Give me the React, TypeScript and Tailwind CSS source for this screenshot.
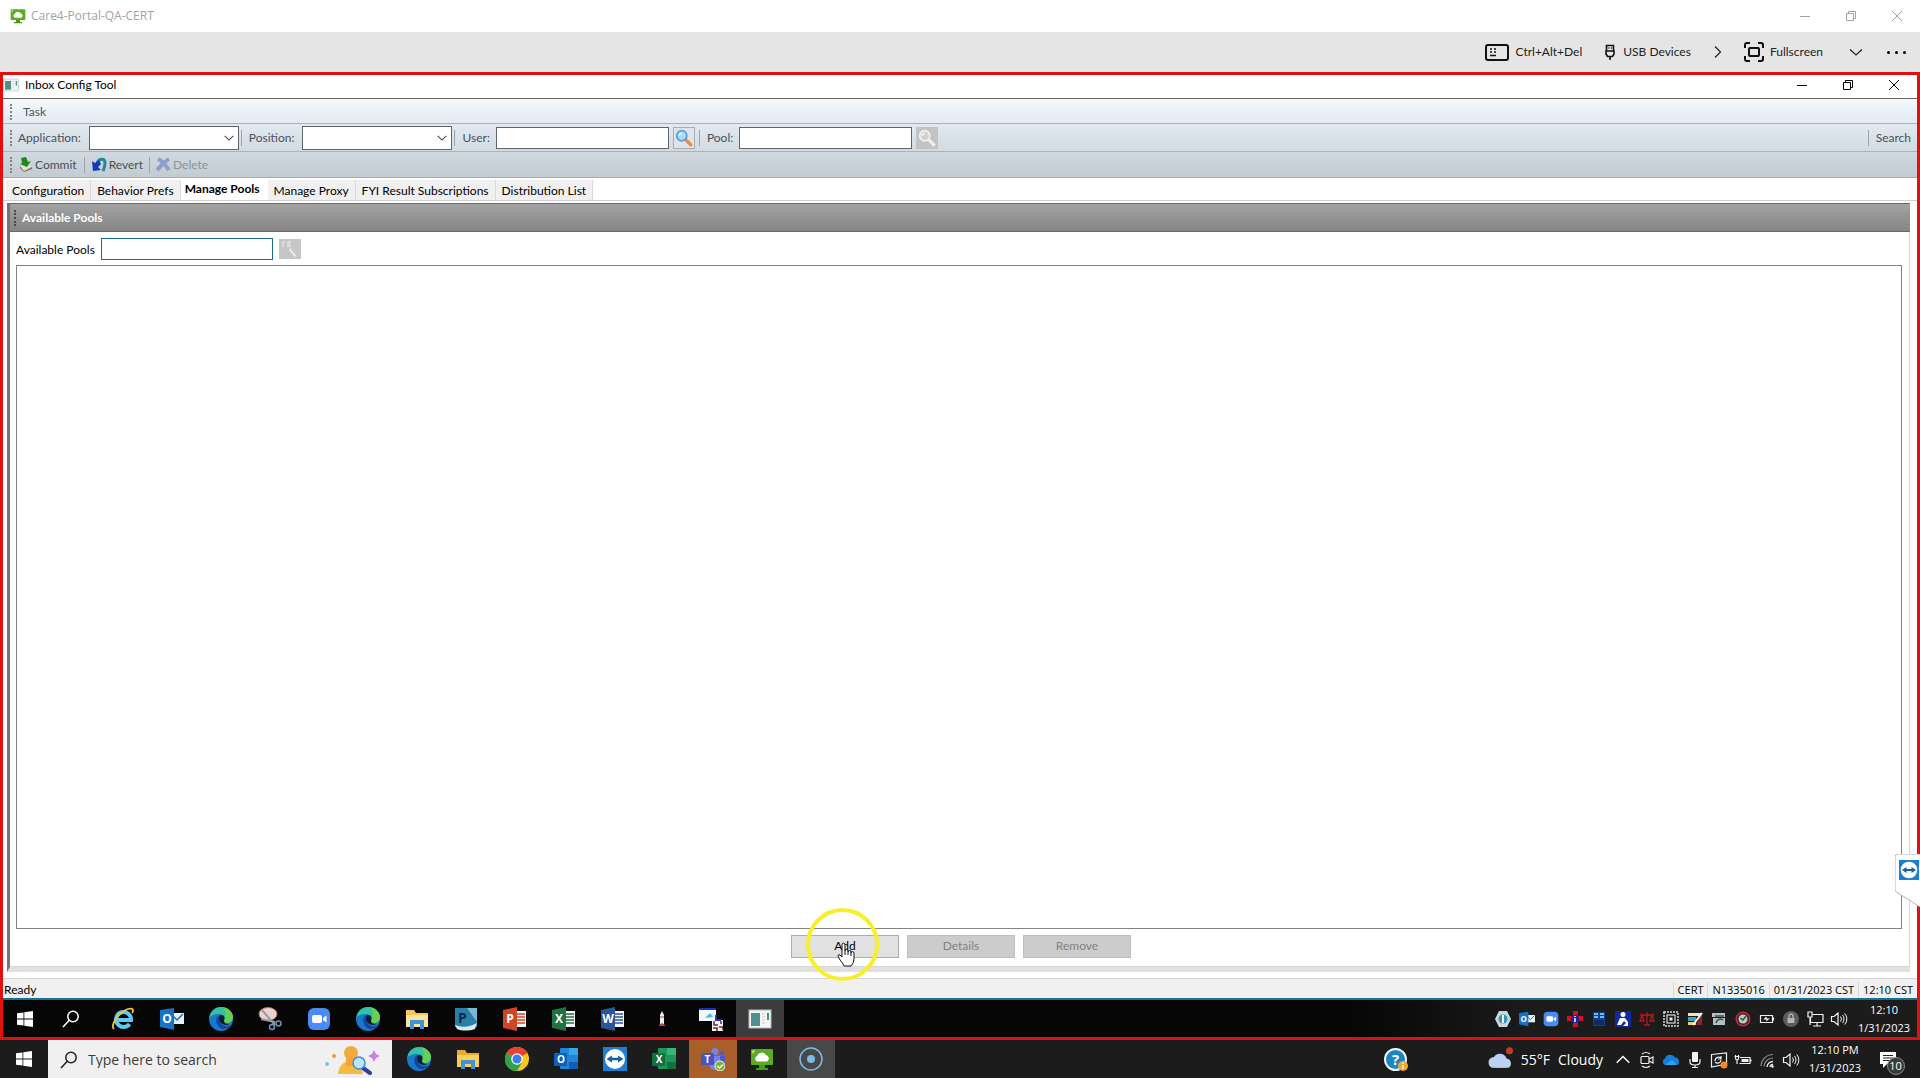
import type { ReactNode } from 'react'

interface IconProps {
  readonly size?: number
}

interface BarItem {
  readonly id: string
  readonly icon: ReactNode
  readonly active?: string
}

function Svg({ size = 24, box = 24, children }: { readonly size?: number; readonly box?: number; readonly children: ReactNode }) {
  return (
    <svg width={size} height={size} viewBox={`0 0 ${box} ${box}`} fill="none" aria-hidden="true" className="block shrink-0">
      {children}
    </svg>
  )
}

/* ---------- window glyphs ---------- */

function MinimizeIcon() {
  return (
    <Svg size={12} box={12}>
      <path d="M1 6.500h10" stroke="currentColor" />
    </Svg>
  )
}

function RestoreIcon() {
  return (
    <Svg size={12} box={12}>
      <path d="M1.500 3.500h7v7h-7zM3.500 3.500v-2h7v7h-2" stroke="currentColor" />
    </Svg>
  )
}

function CloseIcon() {
  return (
    <Svg size={12} box={12}>
      <path d="M1 1l10 10M11 1L1 11" stroke="currentColor" />
    </Svg>
  )
}

function Chevron({ d, size = 14 }: { readonly d: string; readonly size?: number }) {
  return (
    <Svg size={size} box={14}>
      <path d={d} stroke="currentColor" strokeWidth="1.2" />
    </Svg>
  )
}

function PortalIcon({ size = 16 }: IconProps) {
  return (
    <Svg size={size}>
      <rect x="1" y="2" width="22" height="16" rx="1" fill="#5cab22" />
      <path d="M9 18h6v3h3v2H6v-2h3z" fill="#4b9a1b" />
      <path d="M7 14.500a3 3 0 0 1 0-5.500 5 5 0 0 1 9-1 3.500 3.500 0 0 1 1 6.500z" fill="#fff" />
      <path d="M2 4l3-1-2 4z" fill="#d6f0c0" />
    </Svg>
  )
}

function AppWindowIcon({ size = 16 }: IconProps) {
  return (
    <Svg size={size}>
      <rect x="1" y="3" width="22" height="18" fill="#f4f6f6" stroke="#b4bcc0" />
      <rect x="3" y="6" width="9" height="13" fill="#4f8f8c" />
      <path d="M14 7h3M14 10h3M14 13h3M14 16h3" stroke="#d8c4c4" />
      <rect x="19" y="6" width="2" height="7" fill="#3d9a6c" />
    </Svg>
  )
}

/* ---------- toolbar glyphs ---------- */

function CommitIcon() {
  return (
    <Svg size={15} box={15}>
      <path d="M2 9l8-3 4 4-8 4z" fill="#e6e2d0" />
      <path d="M2 9l4 5 8-4v2l-8 3-4-4z" fill="#77776c" />
      <path d="M3 1l5-1 2 5 3-1-4 6-7-3 2-1z" fill="#1d8a1d" />
    </Svg>
  )
}

function RevertIcon() {
  return (
    <Svg size={15} box={15}>
      <path d="M5 6C7 1 13 1 13 6c0 4-1 6-2 8" stroke="#1f8a9c" strokeWidth="3" />
      <path d="M0 4l3 2 4-3 2 4-3 3 3 3-8 1z" fill="#1238c4" />
    </Svg>
  )
}

function DeleteIcon() {
  return (
    <Svg size={15} box={15}>
      <path d="M2 2c5 2 7 6 11 11M13 2C9 4 5 9 1 13" stroke="#8c9fc8" strokeWidth="4" />
    </Svg>
  )
}

function LensIcon({ muted = false }: { readonly muted?: boolean }) {
  return (
    <Svg size={18} box={16}>
      <path d="M9 9l5 5" stroke={muted ? '#ededed' : '#e2953c'} strokeWidth="3" strokeLinecap="round" />
      <circle cx="6" cy="6" r="4.500" fill={muted ? '#d2d2d2' : '#a9dcf8'} stroke={muted ? '#f2f2f2' : '#5a9fd6'} strokeWidth="1.500" />
      <path d="M4 6a2 2 0 0 1 2-2" stroke="#fff" />
    </Svg>
  )
}

function PoolLensIcon() {
  return (
    <Svg size={18} box={18}>
      <path d="M2 7V2h2M6 2h4M6 4h3M6 6h4" stroke="#f4f4f4" />
      <path d="M9 9l6 7" stroke="#efefef" strokeWidth="3" />
      <path d="M10 9l6 7" stroke="#b3b3b3" />
    </Svg>
  )
}

/* ---------- portal bar glyphs ---------- */

function KeyboardIcon() {
  return (
    <Svg size={24}>
      <rect x="1" y="5" width="22" height="15" rx="2" stroke="#111" strokeWidth="2" />
      <path d="M5 9h2M9 9h2M5 12h2M9 12h2M5 15.500h6" stroke="#111" strokeWidth="1.500" />
    </Svg>
  )
}

function UsbIcon() {
  return (
    <Svg size={16} box={16}>
      <path d="M4.500 7V1.500h7V7M4 7h8v3l-1.500 2.500h-5L4 10zM8 12.500V16M6.500 4h1M9 4h1" stroke="#111" strokeWidth="1.600" />
    </Svg>
  )
}

function FullscreenIcon() {
  return (
    <Svg size={22} box={22}>
      <path d="M2 7V4q0-2 2-2h3M15 2h3q2 0 2 2v3M20 15v3q0 2-2 2h-3M7 20H4q-2 0-2-2v-3" stroke="#111" strokeWidth="2" />
      <rect x="6" y="7" width="10" height="8" rx="1" stroke="#111" strokeWidth="2" />
    </Svg>
  )
}

/* ---------- taskbar glyphs ---------- */

function StartIcon() {
  return (
    <Svg size={16} box={16}>
      <path d="M0 2.300l6.500-.9v6.200H0zM7.300 1.300L16 0v7.600H7.300zM0 8.400h6.500v6.200L0 13.700zM7.300 8.400H16V16l-8.700-1.300z" fill="#fff" />
    </Svg>
  )
}

function FindIcon({ color = '#fff' }: { readonly color?: string }) {
  return (
    <Svg size={18} box={18}>
      <circle cx="11" cy="6.500" r="5.200" stroke={color} strokeWidth="1.500" />
      <path d="M7.300 10.300L1 17" stroke={color} strokeWidth="1.600" />
    </Svg>
  )
}

function ExplorerIEIcon() {
  return (
    <Svg>
      <path d="M18.500 17A7.500 7.500 0 1 1 20 13H6" stroke="#5ec9f2" strokeWidth="4" />
      <path d="M3 22C-1 18 8 5 17 2c5-1.500 6 1 4 4" stroke="#f3c53a" strokeWidth="1.800" />
    </Svg>
  )
}

function EdgeIcon() {
  return (
    <Svg>
      <circle cx="12" cy="12" r="12" fill="#1679cc" />
      <path d="M.5 11C1 4 6 0 12 0c7 0 12 5 12 10 0 4-3 6-6 6-3 0-4-1-3-3 1-3-1-6-5-6-4 0-8 1-9.500 4z" fill="#36c2a0" />
      <path d="M14 .2C20 1 24 6 24 10c0 4-3 6-6 6-3 0-4-1-3-3 2-3 3-9-1-12.800z" fill="#66d04f" />
      <path d="M9 9c-4 4-1 12 5 13 3 .5 6-1 8-3.500-5 2-11 0-11-5 0-2 1-3 2-3.500-1-1.500-3-2-4-1z" fill="#12499c" />
      <path d="M15.300 12.500c1-3-1-5-4-4.500 0 0-1.500 2-1 5 1 4 6 6 11 4.500-5 0-7-2.500-6-5z" fill="#0c1c33" />
    </Svg>
  )
}

function SnipIcon() {
  return (
    <Svg>
      <ellipse cx="10" cy="7" rx="9" ry="6.500" fill="#e9d4d2" stroke="#b96a66" />
      <path d="M3 12l14 3M4 3l13 15" stroke="#9a9aa2" strokeWidth="2" />
      <circle cx="14" cy="20" r="2.500" stroke="#6f93b8" strokeWidth="1.500" />
      <circle cx="20.500" cy="16.500" r="2.500" stroke="#6f93b8" strokeWidth="1.500" />
    </Svg>
  )
}

function ZoomIcon({ size = 24 }: IconProps) {
  return (
    <Svg size={size}>
      <rect x="1" y="1" width="22" height="22" rx="6" fill="#4a8cf6" />
      <rect x="5" y="8" width="10" height="8" rx="2" fill="#fff" />
      <path d="M16 11l3.500-2.500v7L16 13z" fill="#fff" />
    </Svg>
  )
}

function FolderIcon({ dark = false }: { readonly dark?: boolean }) {
  return (
    <Svg>
      <path d="M1 3h8l2 3h12v14H1z" fill={dark ? '#e9a92f' : '#f3c55a'} />
      <path d="M1 8h22v12H1z" fill={dark ? '#fbcf55' : '#fde49b'} />
      <path d="M5 13h14v9h-4v-5H9v5H5z" fill="#3f94d8" />
    </Svg>
  )
}

function PortfolioIcon() {
  return (
    <Svg>
      <rect x="1" y="1" width="22" height="19" fill="#2b7fa8" />
      <path d="M13 1h10v14z" fill="#7db8d3" />
      <path d="M1 18c8 3 15 2 22-2l-2 6c-6 2-13 2-18 0z" fill="#dbe9f1" />
      <text x="4" y="16" fontSize="14" fontWeight="700" fontFamily="Open Sans" fill="#0d2c4a">P</text>
    </Svg>
  )
}

function OfficeIcon({ letter, color, size = 24 }: { readonly letter: string; readonly color: string; readonly size?: number }) {
  return (
    <Svg size={size}>
      <rect x="12" y="4" width="11" height="16" fill="#f5f5f5" />
      <path d="M14 7h8M14 10h8M14 13h8M14 16h8" stroke={color} strokeWidth="1.300" />
      <path d="M0 3l14-3v24L0 21z" fill={color} />
      <text x="7" y="16" textAnchor="middle" fontSize="12" fontWeight="700" fontFamily="Open Sans" fill="#fff">{letter}</text>
    </Svg>
  )
}

function OldOutlookIcon({ size = 24 }: IconProps) {
  return (
    <Svg size={size}>
      <rect x="12" y="6" width="12" height="11" fill="#e8f2fb" />
      <path d="M13 9l4 4 6-6" stroke="#1670bd" strokeWidth="1.500" />
      <path d="M0 3l14-2v22L0 20z" fill="#1572c4" />
      <text x="7" y="16" textAnchor="middle" fontSize="12" fontWeight="700" fontFamily="Open Sans" fill="#fff">O</text>
    </Svg>
  )
}

function NewOfficeIcon({ letter, dark, mid, light }: { readonly letter: string; readonly dark: string; readonly mid: string; readonly light: string }) {
  return (
    <Svg>
      <rect x="6" y="1" width="18" height="21" rx="1" fill={mid} />
      <path d="M15 1h9v7h-9z" fill={light} />
      <path d="M15 15h9v7h-9z" fill={dark} />
      <rect x="0" y="6" width="13" height="13" rx="1" fill={dark} />
      <text x="7" y="16" textAnchor="middle" fontSize="10" fontWeight="700" fontFamily="Open Sans" fill="#fff">{letter}</text>
    </Svg>
  )
}

function RocketIcon() {
  return (
    <Svg>
      <path d="M12 4l2 4v9h-4V8z" fill="#eee" />
      <path d="M10 10h4" stroke="#d63a2a" />
      <path d="M9 18l3-2 3 2v1H9z" fill="#c9452f" />
    </Svg>
  )
}

function RemoteIcon() {
  return (
    <Svg>
      <rect x="0" y="1" width="17" height="13" fill="#f4f8ff" />
      <path d="M0 2h17" stroke="#1b2fb8" strokeWidth="2" />
      <path d="M6 11l5-5 3 4z" fill="#3cc0d8" />
      <rect x="13" y="13" width="11" height="11" fill="#f5f5f5" />
      <path d="M15 14v4h4M22 14v3M14 21h4v3M20 20h4v3" stroke="#7d1f3c" strokeWidth="1.500" />
      <path d="M17 8v5h5" stroke="#2235b5" strokeWidth="2" />
    </Svg>
  )
}

function ChromeIcon() {
  return (
    <Svg>
      <circle cx="12" cy="12" r="12" fill="#fbc919" />
      <path d="M12 12L1.600 6A12 12 0 0 1 22.400 6z" fill="#e8412f" />
      <path d="M12 12L1.600 6A12 12 0 0 0 12 24l5.200-9z" fill="#2fa24c" />
      <path d="M12 6.500h10.700L22.400 6H12z" fill="#e8412f" />
      <circle cx="12" cy="12" r="5.800" fill="#fff" />
      <circle cx="12" cy="12" r="4.500" fill="#3e7ee8" />
    </Svg>
  )
}

function TeamViewerIcon({ size = 24 }: IconProps) {
  return (
    <Svg size={size}>
      <rect width="24" height="24" fill="#1d7fd1" />
      <circle cx="12" cy="12" r="10" fill="#fff" />
      <path d="M3.500 12L9 8.500v2.300h6V8.500l5.500 3.500-5.500 3.500v-2.300H9v2.300z" fill="#1560a8" />
    </Svg>
  )
}

function TeamsIcon() {
  return (
    <Svg>
      <circle cx="14" cy="4.500" r="3.500" fill="#7b83eb" />
      <circle cx="21" cy="6" r="2.300" fill="#5059c9" />
      <path d="M8 9h12v8a6 6 0 0 1-12 0z" fill="#7b83eb" />
      <path d="M19 9h5v6a4 4 0 0 1-5 4z" fill="#5059c9" />
      <rect x="0" y="6" width="13" height="12" rx="1" fill="#4b53bc" />
      <text x="6.500" y="16" textAnchor="middle" fontSize="10" fontWeight="700" fontFamily="Open Sans" fill="#fff">T</text>
      <circle cx="19" cy="19" r="5" fill="#7bb52c" stroke="#f4f4f4" />
      <path d="M16.500 19l2 2 3.500-3.500" stroke="#fff" strokeWidth="1.500" />
    </Svg>
  )
}

function RecordIcon() {
  return (
    <Svg>
      <circle cx="12" cy="12" r="11" stroke="#79bce6" strokeWidth="1.500" />
      <circle cx="12" cy="12" r="4" fill="#79bce6" />
    </Svg>
  )
}

/* ---------- tray glyphs ---------- */

function ShieldInfoIcon() {
  return (
    <Svg size={16} box={16}>
      <path d="M4 0h8l4 8-4 8H4L0 8z" fill="#c8d6de" />
      <circle cx="8" cy="8" r="4.500" fill="#3b92b8" />
      <path d="M8 4v8" stroke="#eef6fa" strokeWidth="2" />
    </Svg>
  )
}

function RedCrossIcon() {
  return (
    <Svg size={16} box={16}>
      <path d="M6 0h5v5h5v5h-5v6H6v-6H0V5h6z" fill="#cf1420" />
      <circle cx="8" cy="8" r="4" fill="#1620a8" />
      <path d="M8 7v4M8 5v1" stroke="#fff" strokeWidth="1.500" />
    </Svg>
  )
}

function BlueWindowIcon() {
  return (
    <Svg size={16} box={16}>
      <path d="M2 1h12v14H2z" fill="#12418c" />
      <path d="M3 2h4v2H3zM9 2h4v2H9zM3 5h4v2H3zM9 5h4v2H9z" fill="#6fb6f2" />
      <path d="M3 9h10v5H3z" fill="#0c2c66" />
    </Svg>
  )
}

function PersonIcon() {
  return (
    <Svg size={16} box={16}>
      <rect width="16" height="16" fill="#142a9c" />
      <circle cx="8" cy="3.500" r="2.500" fill="#fff" />
      <path d="M5 7h5l3 4v4H8l3-3-2-2-3 4H2z" fill="#fff" />
    </Svg>
  )
}

function ScalesIcon() {
  return (
    <Svg size={16} box={16}>
      <path d="M8 1v13M5 14h6M1 4h14M3 4L1 10h4zM13 4l-2 6h4z" stroke="#b5171c" strokeWidth="1.300" />
    </Svg>
  )
}

function TargetIcon() {
  return (
    <Svg size={16} box={16}>
      <rect x="1" y="1" width="14" height="14" stroke="#ddd" strokeWidth="1.500" strokeDasharray="2 1" />
      <rect x="4" y="4" width="8" height="8" stroke="#ddd" strokeWidth="1.200" />
      <rect x="6.500" y="6.500" width="3" height="3" fill="#eee" />
    </Svg>
  )
}

function FlagIcon() {
  return (
    <Svg size={16} box={16}>
      <path d="M1 2h13v3H1z" fill="#f1e6b4" />
      <path d="M1 6h8v4H1z" fill="#36a5cf" />
      <path d="M1 11h8v3H1z" fill="#f3d060" />
      <path d="M15 3v11h-6z" fill="#8f2327" />
      <path d="M15 2L6 14" stroke="#f7f2ea" strokeWidth="2" />
    </Svg>
  )
}

function MonitorIcon() {
  return (
    <Svg size={16} box={16}>
      <path d="M1 2h13v4H1zM2 7h12v7H2z" fill="#b6bec0" />
      <path d="M4 5h9M5 12c1-4 5-5 7-3" stroke="#3a5350" strokeWidth="1.500" />
    </Svg>
  )
}

function RedClockIcon() {
  return (
    <Svg size={16} box={16}>
      <circle cx="8" cy="8" r="6.800" fill="#45201f" stroke="#c42b45" strokeWidth="1.400" />
      <circle cx="8" cy="8" r="4.500" fill="#b9c9c3" />
      <path d="M5.500 7L8 9l3-4" stroke="#2c4f42" strokeWidth="1.400" />
    </Svg>
  )
}

function BatteryIcon() {
  return (
    <Svg size={16} box={16}>
      <path d="M1.500 4.500h12v7h-12zM14.500 6.500v3" stroke="#eee" strokeWidth="1.200" />
      <path d="M7 5.500L4.500 8.500h3L7 10.500l4-3H8z" fill="#fff" />
    </Svg>
  )
}

function LockIcon() {
  return (
    <Svg size={16} box={16}>
      <circle cx="8" cy="8" r="8" fill="#5c5c5c" />
      <path d="M4.500 7h7v5h-7z" fill="#b5b5b5" />
      <path d="M6 7V5a2 2 0 0 1 4 0v2" stroke="#b5b5b5" strokeWidth="1.300" />
    </Svg>
  )
}

function NetworkIcon() {
  return (
    <Svg size={18} box={18}>
      <path d="M6 4.500h11v8H4.500V8M11 12.500v3M7 16h8M2 2h4v5H2zM4 7v8" stroke="#f2f2f2" strokeWidth="1.200" />
    </Svg>
  )
}

function SpeakerIcon() {
  return (
    <Svg size={18} box={18}>
      <path d="M1.500 6.500h2.500L8 3v12l-4-3.500H1.500z" stroke="#f2f2f2" strokeWidth="1.200" />
      <path d="M10.500 6.500a4 4 0 0 1 0 5M12.500 5a6 6 0 0 1 0 8M14.700 3.500a8 8 0 0 1 0 11" stroke="#f2f2f2" />
    </Svg>
  )
}

function HelpIcon() {
  return (
    <Svg>
      <circle cx="11.500" cy="11.500" r="10.500" fill="#1c86c4" stroke="#f0f6fa" strokeWidth="2" />
      <text x="11.500" y="17" textAnchor="middle" fontSize="15" fontWeight="700" fontFamily="Open Sans" fill="#fff">?</text>
      <circle cx="19" cy="18" r="5" fill="#f0a734" />
      <path d="M19 17v4M19 14.500v1.200" stroke="#fff" strokeWidth="1.500" />
    </Svg>
  )
}

function WeatherIcon() {
  return (
    <Svg size={25} box={25}>
      <path d="M6 21a5.500 5.500 0 0 1 0-11 7 7 0 0 1 12.500 1.500A5 5 0 0 1 20 21z" fill="#bcd0f2" />
      <path d="M4 19c5 2 13 2 18 0l-2 2H6z" fill="#8fadde" />
      <circle cx="21.500" cy="3.800" r="3.500" fill="#c93a26" />
    </Svg>
  )
}

function MeetIcon() {
  return (
    <Svg size={18} box={18}>
      <rect x="3" y="5.500" width="8" height="7" rx="1" stroke="#eee" strokeWidth="1.200" />
      <path d="M11 8l4-2v6l-4-2M4 3q4-3 8 0M4 15q4 3 8 0" stroke="#eee" strokeWidth="1.200" />
    </Svg>
  )
}

function OneDriveIcon() {
  return (
    <Svg size={18} box={18}>
      <path d="M3 14a3.500 3.500 0 0 1 0-6.500 5.500 5.500 0 0 1 10-1 4 4 0 0 1 2 7.500z" fill="#1480d8" />
      <path d="M3 14l7-5 5 5z" fill="#2da4f0" />
    </Svg>
  )
}

function MicIcon() {
  return (
    <Svg size={18} box={18}>
      <rect x="6" y="1" width="6" height="10" rx="1" fill="#f4f4f4" />
      <path d="M4 8v3q0 3 5 3t5-3V8M9 14v3M6 16.500h6" stroke="#f4f4f4" strokeWidth="1.200" />
    </Svg>
  )
}

function SyncIcon() {
  return (
    <Svg size={18} box={18}>
      <path d="M1.500 3.500l15-1.500v11l-15 3z" stroke="#eee" strokeWidth="1.200" />
      <path d="M5 10c0-4 5-5 6-2M11 5v3H8M11 9c0 3-4 4-6 2" stroke="#eee" strokeWidth="1.200" />
      <circle cx="14" cy="14" r="3.500" fill="#f58a1f" />
    </Svg>
  )
}

function PluggedIcon() {
  return (
    <Svg size={18} box={18}>
      <path d="M6 6.500h10v6H5.500M17 8.500v2M1.500 4v3q0 2 1.500 2t1.500-2V4M3 9v4M0.500 5.500h5" stroke="#eee" strokeWidth="1.200" />
      <path d="M7.500 8h7v3h-7z" fill="#eee" />
    </Svg>
  )
}

function WifiIcon() {
  return (
    <Svg size={18} box={18}>
      <path d="M3 15A12 12 0 0 1 15 3.500M6 15.500a9 9 0 0 1 9-8.500" stroke="#8c8c8c" strokeWidth="1.200" />
      <path d="M9 16a6 6 0 0 1 6-5.500M12 16a3 3 0 0 1 3-2.500" stroke="#eee" strokeWidth="1.300" />
      <circle cx="14.500" cy="15.500" r="1.200" fill="#fff" />
    </Svg>
  )
}

function SearchArt() {
  return (
    <svg width="56" height="32" viewBox="0 0 56 32" fill="none" aria-hidden="true">
      <circle cx="27" cy="9" r="7" fill="#f2a93b" />
      <path d="M14 30c1-9 6-13 12-13s12 4 13 13z" fill="#f7b942" />
      <path d="M22 14h10v8H22z" fill="#f2a534" />
      <path d="M39 24l7 5" stroke="#2a3fa8" strokeWidth="4" strokeLinecap="round" />
      <circle cx="35" cy="19" r="6" fill="#bfe3f7" stroke="#3b8fd0" strokeWidth="1.500" />
      <path d="M50 6l2 4 4 2-4 2-2 4-2-4-4-2 4-2z" fill="#c77fe8" />
      <circle cx="10" cy="12" r="2" fill="#e7984a" />
      <circle cx="3" cy="20" r="2" fill="#7ec1e6" />
    </svg>
  )
}

const REMOTE_APPS: readonly BarItem[] = [
  { id: 'Internet Explorer', icon: <ExplorerIEIcon /> },
  { id: 'Outlook', icon: <OldOutlookIcon /> },
  { id: 'Edge', icon: <EdgeIcon /> },
  { id: 'Snipping Tool', icon: <SnipIcon /> },
  { id: 'Zoom', icon: <ZoomIcon /> },
  { id: 'Edge profile', icon: <EdgeIcon /> },
  { id: 'File Explorer', icon: <FolderIcon /> },
  { id: 'Portfolio', icon: <PortfolioIcon /> },
  { id: 'PowerPoint', icon: <OfficeIcon letter="P" color="#d04526" /> },
  { id: 'Excel', icon: <OfficeIcon letter="X" color="#1f7244" /> },
  { id: 'Word', icon: <OfficeIcon letter="W" color="#2a5699" /> },
  { id: 'Launcher', icon: <RocketIcon /> },
  { id: 'Remote apps', icon: <RemoteIcon /> },
  { id: 'Inbox Config Tool', icon: <AppWindowIcon size={24} />, active: 'bg-[#3c3c3c]' },
]

const LOCAL_APPS: readonly BarItem[] = [
  { id: 'Edge', icon: <EdgeIcon /> },
  { id: 'File Explorer', icon: <FolderIcon dark /> },
  { id: 'Chrome', icon: <ChromeIcon /> },
  { id: 'Outlook', icon: <NewOfficeIcon letter="O" dark="#0f5fb5" mid="#1d86d8" light="#37a9ea" /> },
  { id: 'TeamViewer', icon: <TeamViewerIcon /> },
  { id: 'Excel', icon: <NewOfficeIcon letter="X" dark="#12703e" mid="#1f9657" light="#35b877" /> },
  { id: 'Teams', icon: <TeamsIcon />, active: 'bg-[#a85f2a]' },
  { id: 'Portal', icon: <PortalIcon size={24} /> },
  { id: 'Recorder', icon: <RecordIcon />, active: 'bg-[#484848]' },
]

const REMOTE_TRAY: readonly BarItem[] = [
  { id: 'shield', icon: <ShieldInfoIcon /> },
  { id: 'outlook', icon: <OldOutlookIcon size={16} /> },
  { id: 'zoom', icon: <ZoomIcon size={16} /> },
  { id: 'cross', icon: <RedCrossIcon /> },
  { id: 'window', icon: <BlueWindowIcon /> },
  { id: 'person', icon: <PersonIcon /> },
  { id: 'scales', icon: <ScalesIcon /> },
  { id: 'target', icon: <TargetIcon /> },
  { id: 'flag', icon: <FlagIcon /> },
  { id: 'monitor', icon: <MonitorIcon /> },
  { id: 'clock', icon: <RedClockIcon /> },
  { id: 'battery', icon: <BatteryIcon /> },
  { id: 'lock', icon: <LockIcon /> },
  { id: 'network', icon: <NetworkIcon /> },
  { id: 'speaker', icon: <SpeakerIcon /> },
]

const LOCAL_TRAY: readonly BarItem[] = [
  { id: 'more', icon: <Chevron size={16} d="M1.500 9.500L7 4l5.500 5.500" /> },
  { id: 'meet', icon: <MeetIcon /> },
  { id: 'onedrive', icon: <OneDriveIcon /> },
  { id: 'mic', icon: <MicIcon /> },
  { id: 'sync', icon: <SyncIcon /> },
  { id: 'power', icon: <PluggedIcon /> },
  { id: 'wifi', icon: <WifiIcon /> },
  { id: 'speaker', icon: <SpeakerIcon /> },
]

const TABS = ['Configuration', 'Behavior Prefs', 'Manage Pools', 'Manage Proxy', 'FYI Result Subscriptions', 'Distribution List'] as const

const STATUS = ['CERT', 'N1335016', '01/31/2023 CST', '12:10 CST'] as const

function WindowButtons() {
  return (
    <div className="flex">
      <button aria-label="Minimize" className="flex w-[46px] items-center justify-center"><MinimizeIcon /></button>
      <button aria-label="Restore" className="flex w-[46px] items-center justify-center"><RestoreIcon /></button>
      <button aria-label="Close" className="flex w-[46px] items-center justify-center"><CloseIcon /></button>
    </div>
  )
}

function Grip({ dark = false }: { readonly dark?: boolean }) {
  return <span className={`h-4 w-0 border-l-2 border-dotted ${dark ? 'border-[#4a4a4a]' : 'border-[#7d868c]'}`} />
}

function Divider() {
  return <span className="h-4 w-px bg-[#9aa5ad]" />
}

function ComboField({ id, label }: { readonly id: string; readonly label: string }) {
  return (
    <div className="flex items-center gap-2">
      <label htmlFor={id}>{label}</label>
      <div className="relative mr-[2px]">
        <select id={id} className="block h-6 w-[150px] appearance-none border border-[#5c6570] bg-white" />
        <span className="pointer-events-none absolute right-1 top-[6px] text-[#444]">
          <Chevron size={12} d="M2 4.500L7 9.500 12 4.500" />
        </span>
      </div>
    </div>
  )
}

function SearchField({ id, label, disabled = false }: { readonly id: string; readonly label: string; readonly disabled?: boolean }) {
  return (
    <div className="flex items-center">
      <label htmlFor={id}>{label}</label>
      <input id={id} className="ml-[6px] h-[22px] w-[173px] border border-[#5c6570] bg-white px-1" />
      <button
        aria-label={`Find ${id}`}
        disabled={disabled}
        className={`mx-1 flex size-[22px] items-center justify-center border ${disabled ? 'border-[#c3c3c3] bg-[#c3c3c3]' : 'border-[#a7adb3] bg-[#dfe4ea]'}`}
      >
        <LensIcon muted={disabled} />
      </button>
    </div>
  )
}

function AppButtons({ items }: { readonly items: readonly BarItem[] }) {
  return (
    <div className="flex gap-px">
      {items.map((item) => (
        <button key={item.id} aria-label={item.id} className={`flex w-12 items-center justify-center ${item.active ?? ''}`}>
          {item.icon}
        </button>
      ))}
    </div>
  )
}

function Tray({ items }: { readonly items: readonly BarItem[] }) {
  return (
    <div className="flex">
      {items.map((item) => (
        <button key={item.id} aria-label={item.id} className="flex w-6 items-center justify-center">
          {item.icon}
        </button>
      ))}
    </div>
  )
}

function PortalHeader() {
  return (
    <header>
      <div className="flex h-8 justify-between bg-white text-[#a3a3a3]">
        <div className="flex items-center gap-[5px] pl-[10px]">
          <PortalIcon />
          <span>Care4-Portal-QA-CERT</span>
        </div>
        <WindowButtons />
      </div>
      <div className="flex h-10 items-center justify-end bg-[#e5e5e5] pr-[14px] font-[Lato,sans-serif] text-[#222]">
        <button className="flex items-center gap-[7px]"><KeyboardIcon />Ctrl+Alt+Del</button>
        <button className="ml-5 flex items-center gap-[5px]"><UsbIcon />USB Devices</button>
        <button aria-label="More devices" className="ml-5"><Chevron d="M4 1.500L9.500 7 4 12.500" /></button>
        <button className="ml-[18px] flex items-center gap-[5px]"><FullscreenIcon />Fullscreen</button>
        <button aria-label="Expand" className="ml-[26px]"><Chevron d="M1 4.500L7 10l6-5.500" /></button>
        <button aria-label="More options" className="ml-6 flex gap-[5px]">
          <span className="size-[3px] rounded-full bg-black" />
          <span className="size-[3px] rounded-full bg-black" />
          <span className="size-[3px] rounded-full bg-black" />
        </button>
      </div>
    </header>
  )
}

function Toolbars() {
  return (
    <div className="text-[#48525a]">
      <div className="flex h-[25px] items-center gap-[11px] border-b border-[#a9b3ba] bg-linear-to-b from-[#f4f9fc] to-[#e2eaf2] pl-[7px] pt-px">
        <Grip />
        <button>Task</button>
      </div>
      <div className="flex h-7 items-center border-b border-[#a9b3ba] bg-linear-to-b from-[#e2e9f1] to-[#d2dae2] pl-[7px] pr-[6px]">
        <Grip />
        <div className="ml-[6px] flex flex-1 items-center">
          <ComboField id="application" label="Application:" />
          <span className="mr-[7px] flex"><Divider /></span>
          <ComboField id="position" label="Position:" />
          <span className="mr-[7px] flex"><Divider /></span>
          <SearchField id="user" label="User:" />
          <span className="mr-[7px] flex"><Divider /></span>
          <SearchField id="pool" label="Pool:" disabled />
        </div>
        <Divider />
        <button className="ml-[7px]">Search</button>
      </div>
      <div className="flex h-[26px] items-center border-b border-[#a3adb3] bg-linear-to-b from-[#d0d9e0] to-[#c1cbd0] pl-[7px]">
        <Grip />
        <button className="ml-[6px] flex items-center gap-[2px]"><CommitIcon />Commit</button>
        <span className="mx-[7px] flex"><Divider /></span>
        <button className="flex items-center gap-[2px]"><RevertIcon />Revert</button>
        <span className="mx-[6px] flex"><Divider /></span>
        <button disabled className="flex items-center gap-[2px] text-[#8a949b]"><DeleteIcon />Delete</button>
      </div>
    </div>
  )
}

function Tabs() {
  return (
    <div role="tablist" className="flex h-[23px] items-end border-b border-[#d0d0d0] pl-[3px] text-black">
      {TABS.map((tab) => {
        const selected = tab === 'Manage Pools'
        return (
          <button
            key={tab}
            role="tab"
            aria-selected={selected}
            className={selected ? 'h-[22px] bg-white pl-1 pr-2 font-bold' : 'h-5 border-r border-[#dadada] bg-[#f0f0f0] px-[6px] pt-px'}
          >
            {tab}
          </button>
        )
      })}
    </div>
  )
}

function HandCursor() {
  return (
    <svg width="18" height="25" viewBox="0 0 18 25" aria-hidden="true" className="absolute left-[27px] top-[30px]">
      <path
        d="M5 15V3q0-2 1.500-2T8 3v6q0-1.500 1.500-1.500T11 9v1q0-1.500 1.500-1.500T14 10v1q0-1.500 1.300-1.500T17 11v6q0 4-3 7H7q-1-3-4-6l-2-4q0-2 2-1z"
        fill="#fff"
        stroke="#111"
      />
      <path d="M8 9v4M11 10v3M14 11v3" stroke="#111" />
    </svg>
  )
}

function PoolsPanel() {
  return (
    <main className="flex flex-1 flex-col pb-[6px] pl-1 pr-[7px] pt-[2px]">
      <section className="flex flex-1 flex-col border-b-[5px] border-l-[3px] border-b-[#e0e0e0] border-l-[#77707a]">
        <h1 className="flex h-[29px] items-center gap-[6px] border-y border-[#686868] bg-linear-to-b from-[#a2a2a2] to-[#858585] pl-1 font-bold text-white">
          <Grip dark />
          Available Pools
        </h1>
        <div className="flex flex-1 flex-col border-b border-r border-[#d6d6d6] pl-[6px] pr-[7px]">
          <div className="flex h-[33px] items-center gap-[6px] text-black">
            <label htmlFor="available" className="pt-[3px]">Available Pools</label>
            <input id="available" className="h-[22px] w-[172px] border border-[#1a6f8c] bg-white px-1" />
            <button aria-label="Find available pool" disabled className="flex h-5 w-[22px] items-center justify-center bg-[#c6c6c6]"><PoolLensIcon /></button>
          </div>
          <div className="flex-1 border border-[#828287] bg-white" />
          <div className="flex h-[37px] items-center justify-center gap-2 pb-[3px] pl-1">
            <div className="relative">
              <button className="block h-[23px] w-[108px] border border-[#adadad] bg-[#e1e1e1] text-black">Add</button>
              <div className="pointer-events-none absolute -top-[27px] left-[15px] size-[73px] rounded-full border-4 border-[#f5f02a]">
                <HandCursor />
              </div>
            </div>
            <button disabled className="h-[23px] w-[108px] border border-[#bfbfbf] bg-[#cccccc] text-[#838383]">Details</button>
            <button disabled className="h-[23px] w-[108px] border border-[#bfbfbf] bg-[#cccccc] text-[#838383]">Remove</button>
          </div>
        </div>
      </section>
    </main>
  )
}

function StatusBar() {
  return (
    <div className="flex h-[22px] items-center border-t border-[#d4d4d4] border-b-2 border-b-[#1a6f96] bg-[#f0f0f0] pl-px pr-1 pt-[2px] text-black">
      <span className="flex-1">Ready</span>
      {STATUS.map((text) => (
        <span key={text} className="border-l border-[#d9d9d9] px-1 font-['Open_Sans',sans-serif] text-[11px] last:pr-0">{text}</span>
      ))}
    </div>
  )
}

function RemoteTaskbar() {
  return (
    <nav aria-label="Remote taskbar" className="flex h-[37px] justify-between bg-linear-to-r from-[#060606] from-70% to-[#1c1c1c] to-80% font-['Open_Sans',sans-serif] text-white">
      <div className="flex">
        <button aria-label="Start" className="flex w-11 items-center justify-center"><StartIcon /></button>
        <button aria-label="Search" className="mr-1 flex w-12 items-center justify-center"><FindIcon /></button>
        <AppButtons items={REMOTE_APPS} />
      </div>
      <div className="flex">
        <Tray items={REMOTE_TRAY} />
        <time className="w-[66px] pt-px text-center text-[11px] leading-[18px]">12:10<br />1/31/2023</time>
      </div>
    </nav>
  )
}

function LocalTaskbar() {
  return (
    <nav aria-label="Taskbar" className="flex h-[38px] justify-between bg-[#1c1c1c] text-white">
      <div className="flex">
        <button aria-label="Start" className="flex w-12 items-center justify-center"><StartIcon /></button>
        <label className="mr-[3px] flex w-[344px] items-center bg-[#f0f0f0] pl-3 pr-3 pt-[2px]">
          <FindIcon color="#222" />
          <input aria-label="Search" placeholder="Type here to search" className="ml-[10px] min-w-0 flex-1 bg-transparent text-[14px] placeholder:text-[#3c3c3c]" />
          <SearchArt />
        </label>
        <AppButtons items={LOCAL_APPS} />
      </div>
      <div className="flex pt-px">
        <button aria-label="Help" className="mr-20 flex items-center"><HelpIcon /></button>
        <button className="mr-2 flex items-center gap-2 text-[14px]">
          <WeatherIcon />
          <span>55°F</span>
          <span>Cloudy</span>
        </button>
        <Tray items={LOCAL_TRAY} />
        <time className="w-16 text-center text-[11px] leading-[18px]">12:10 PM<br />1/31/2023</time>
        <button className="flex w-[53px] items-center justify-center pr-3">
          <span className="relative">
            <Svg size={18} box={18}>
              <path d="M1 1h16v12H8l-4 4v-4H1z" fill="#fff" />
              <path d="M4 4.500h10M4 7h10M4 9.500h7" stroke="#222" />
            </Svg>
            <span className="absolute left-2 top-[6px] flex size-[18px] items-center justify-center rounded-full border border-[#8a8a8a] bg-[#3a3a3a] text-[11px] leading-none">10</span>
          </span>
        </button>
      </div>
    </nav>
  )
}

export default function App() {
  return (
    <div className="flex min-h-screen flex-col bg-white font-['Open_Sans',sans-serif] text-[12px] leading-4">
      <PortalHeader />
      <div className="relative flex flex-1 flex-col border-[3px] border-[#e01010] font-[Lato,sans-serif]">
        <div className="flex h-6 justify-between border-b border-[#666] pb-1 text-black">
          <div className="flex items-center gap-[6px]">
            <AppWindowIcon />
            <span>Inbox Config Tool</span>
          </div>
          <WindowButtons />
        </div>
        <Toolbars />
        <Tabs />
        <PoolsPanel />
        <StatusBar />
        <RemoteTaskbar />
        <div className="absolute -right-[3px] bottom-[129px]">
          <svg width="25" height="54" viewBox="0 0 25 54" aria-hidden="true">
            <path d="M25 0H3Q0 0 0 3v34l25 16z" fill="#fff" />
            <path d="M25 0H3Q0 0 0 3v34l25 16" fill="none" stroke="#b5b5b5" />
          </svg>
          <button aria-label="TeamViewer panel" className="absolute left-1 top-[6px]"><TeamViewerIcon size={20} /></button>
        </div>
      </div>
      <LocalTaskbar />
    </div>
  )
}
